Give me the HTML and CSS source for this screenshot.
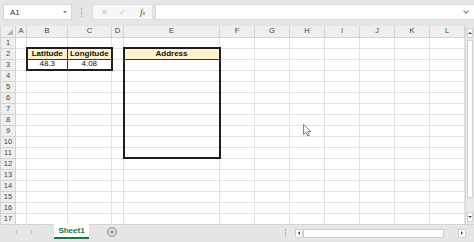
FILE: index.html
```html
<!DOCTYPE html>
<html lang="en">
<head>
  <meta charset="UTF-8" />
  <title>Book1 - Excel</title>
  <link rel="stylesheet" href="styles.css">
</head>
<body>
  <div class="app">

    <!-- Formula bar -->
    <div class="formula-bar">
      <div class="name-box"><span>A1</span><span class="caret"></span></div>
      <div class="dots"></div>
      <div class="tools">
        <span class="tool-x">✕</span>
        <span class="tool-ok">✓</span>
        <span class="tool-fx">f<small>x</small></span>
      </div>
      <div class="formula-input"><span class="expand"></span></div>
    </div>

    <!-- Sheet -->
    <div class="sheet">
      <table class="grid">
        <colgroup>
          <col class="c-rh"><col class="c-a"><col class="c-b"><col class="c-c"><col class="c-d"><col class="c-e">
          <col class="c-n"><col class="c-n"><col class="c-n"><col class="c-n"><col class="c-n"><col class="c-n"><col class="c-n">
        </colgroup>
        <tr class="heads"><th class="corner"><span></span></th><th>A</th><th>B</th><th>C</th><th>D</th><th>E</th><th>F</th><th>G</th><th>H</th><th>I</th><th>J</th><th>K</th><th>L</th></tr>
        <tr><th>1</th><td></td><td></td><td></td><td></td><td></td><td></td><td></td><td></td><td></td><td></td><td></td><td></td></tr>
        <tr><th>2</th><td></td><td class="hd bt bl ir ib">Latitude</td><td class="hd bt br ib">Longitude</td><td></td><td class="hd bt bl br ib">Address</td><td></td><td></td><td></td><td></td><td></td><td></td><td></td></tr>
        <tr><th>3</th><td></td><td class="num bl bb ir">48.3</td><td class="num br bb">4.08</td><td></td><td class="bl br"></td><td></td><td></td><td></td><td></td><td></td><td></td><td></td></tr>
        <tr><th>4</th><td></td><td></td><td></td><td></td><td class="bl br"></td><td></td><td></td><td></td><td></td><td></td><td></td><td></td></tr>
        <tr><th>5</th><td></td><td></td><td></td><td></td><td class="bl br"></td><td></td><td></td><td></td><td></td><td></td><td></td><td></td></tr>
        <tr><th>6</th><td></td><td></td><td></td><td></td><td class="bl br"></td><td></td><td></td><td></td><td></td><td></td><td></td><td></td></tr>
        <tr><th>7</th><td></td><td></td><td></td><td></td><td class="bl br"></td><td></td><td></td><td></td><td></td><td></td><td></td><td></td></tr>
        <tr><th>8</th><td></td><td></td><td></td><td></td><td class="bl br"></td><td></td><td></td><td></td><td></td><td></td><td></td><td></td></tr>
        <tr><th>9</th><td></td><td></td><td></td><td></td><td class="bl br"></td><td></td><td></td><td></td><td></td><td></td><td></td><td></td></tr>
        <tr><th>10</th><td></td><td></td><td></td><td></td><td class="bl br"></td><td></td><td></td><td></td><td></td><td></td><td></td><td></td></tr>
        <tr><th>11</th><td></td><td></td><td></td><td></td><td class="bl br bb"></td><td></td><td></td><td></td><td></td><td></td><td></td><td></td></tr>
        <tr><th>12</th><td></td><td></td><td></td><td></td><td></td><td></td><td></td><td></td><td></td><td></td><td></td><td></td></tr>
        <tr><th>13</th><td></td><td></td><td></td><td></td><td></td><td></td><td></td><td></td><td></td><td></td><td></td><td></td></tr>
        <tr><th>14</th><td></td><td></td><td></td><td></td><td></td><td></td><td></td><td></td><td></td><td></td><td></td><td></td></tr>
        <tr><th>15</th><td></td><td></td><td></td><td></td><td></td><td></td><td></td><td></td><td></td><td></td><td></td><td></td></tr>
        <tr><th>16</th><td></td><td></td><td></td><td></td><td></td><td></td><td></td><td></td><td></td><td></td><td></td><td></td></tr>
        <tr><th>17</th><td></td><td></td><td></td><td></td><td></td><td></td><td></td><td></td><td></td><td></td><td></td><td></td></tr>
      </table>

      <div class="vscroll">
        <div class="arrow-btn"><span class="tri-up"></span></div>
        <div class="vthumb"></div>
        <div class="vtrack"></div>
        <div class="arrow-btn"><span class="tri-down"></span></div>
      </div>
    </div>

    <!-- Sheet tabs + horizontal scroll -->
    <div class="tab-bar">
      <div class="nav"><span class="tri-left faint"></span><span class="tri-right faint"></span></div>
      <div class="tab">Sheet1</div>
      <div class="add">
        <svg width="10" height="10" viewBox="0 0 10 10">
          <circle cx="5" cy="5" r="4.3" fill="none" stroke="#777" stroke-width="0.9"/>
          <path d="M5 2.8V7.2M2.8 5H7.2" stroke="#777" stroke-width="0.9"/>
        </svg>
      </div>
      <div class="spacer"></div>
      <div class="hscroll">
        <div class="hdots"></div>
        <div class="arrow-btn h"><span class="tri-left"></span></div>
        <div class="hthumb"></div>
        <div class="htrack"></div>
        <div class="arrow-btn h"><span class="tri-right"></span></div>
      </div>
    </div>

    <!-- mouse pointer -->
    <svg class="pointer" width="9" height="13" viewBox="0 0 9 13">
      <path d="M0.5 0.5V10.5L3 8.2L4.8 12L6.4 11.3L4.7 7.6H8Z" fill="#fff" stroke="#666" stroke-width="0.8"/>
    </svg>
  </div>
</body>
</html>
```

FILE: styles.css
```css
body {
  margin: 0;
  padding: 0;
  background: #e6e6e6;
  font-family: 'Liberation Sans', Arial, sans-serif;
  color: #222;
}

.app {
  position: relative;
  width: 474px;
  height: 242px;
  overflow: hidden;
  background: #e6e6e6;
}

/* ---------- formula bar ---------- */

.formula-bar {
  display: flex;
  align-items: center;
  height: 22px;
  padding-top: 2px;
  margin-bottom: 4px;
  box-sizing: border-box;
}

.name-box {
  display: flex;
  align-items: center;
  justify-content: space-between;
  width: 69px;
  height: 16px;
  margin-left: 3px;
  padding: 0 4px 0 6px;
  box-sizing: border-box;
  background: #fff;
  border: 1px solid #d6d6d6;
  font-size: 8px;
  color: #333;
}

.caret {
  width: 0;
  height: 0;
  border-left: 2px solid transparent;
  border-right: 2px solid transparent;
  border-top: 2px solid #666;
}

.dots {
  width: 1px;
  height: 9px;
  margin: 0 9px 0 9px;
  border-left: 1px dotted #9a9a9a;
}

.tools {
  display: flex;
  align-items: center;
  width: 61px;
  height: 16px;
  box-sizing: border-box;
  padding-left: 7px;
  gap: 9px;
  background: #f7f7f7;
  border: 1px solid #dedede;
  font-size: 8px;
}

.tool-x,
.tool-ok {
  color: #c4c4c4;
  width: 9px;
  text-align: center;
}

.tool-fx {
  margin-left: 4px;
  color: #444;
  font-family: 'Liberation Serif', serif;
  font-style: italic;
  font-size: 9px;
}

.tool-fx small {
  font-size: 6px;
}

.formula-input {
  position: relative;
  flex: 1;
  height: 16px;
  margin-left: 2px;
  background: #fff;
  border: 1px solid #d6d6d6;
  border-right: none;
  box-sizing: border-box;
}

.expand {
  position: absolute;
  right: 6px;
  top: 4px;
  width: 3px;
  height: 3px;
  border-right: 1px solid #777;
  border-bottom: 1px solid #777;
  transform: rotate(45deg);
}

/* ---------- sheet grid ---------- */

.sheet {
  display: flex;
  height: 198px;
  overflow: hidden;
  background: #fff;
}

.grid {
  border-collapse: collapse;
  table-layout: fixed;
  width: 464px;
  font-size: 8px;
}

.c-rh { width: 15px; }
.c-a { width: 11px; }
.c-b { width: 41px; }
.c-c { width: 44px; }
.c-d { width: 12px; }
.c-e { width: 96px; }
.c-n { width: 35px; }

.grid tr {
  height: 11px;
}

.grid td,
.grid th {
  padding: 0;
  height: 8px;
  line-height: 8px;
  overflow: hidden;
  white-space: nowrap;
  text-align: center;
}

.grid td {
  border: 1px solid #e2e2e2;
  color: #111;
}

.grid th {
  background: #efefef;
  border: 1px solid #d4d4d4;
  font-weight: normal;
  color: #444;
  font-size: 7.5px;
}

.grid tr.heads th {
  border-top: none;
}

.grid th.corner {
  position: relative;
}

.corner span {
  position: absolute;
  right: 2px;
  bottom: 2px;
  width: 0;
  height: 0;
  border-left: 6px solid transparent;
  border-bottom: 6px solid #b4b4b4;
}

.grid td.hd {
  background: #fff2cc;
  font-weight: bold;
}

.grid td.bt { border-top: 2px solid #1e1e1e; }
.grid td.bb { border-bottom: 2px solid #1e1e1e; }
.grid td.bl { border-left: 2px solid #1e1e1e; }
.grid td.br { border-right: 2px solid #1e1e1e; }
.grid td.ib { border-bottom: 1px solid #333; }
.grid td.ir { border-right: 1px solid #333; }

/* ---------- scrollbars ---------- */

.vscroll {
  display: flex;
  flex-direction: column;
  width: 10px;
  background: #eaeaea;
  border-left: 1px solid #d8d8d8;
}

.arrow-btn {
  display: flex;
  align-items: center;
  justify-content: center;
  height: 8px;
  margin: 2px 1px;
  background: #fff;
  border: 1px solid #d0d0d0;
}

.vthumb {
  height: 156px;
  margin: 0 1px;
  background: #fff;
  border: 1px solid #cfcfcf;
}

.vtrack {
  flex: 1;
}

.tri-up,
.tri-down,
.tri-left,
.tri-right {
  width: 0;
  height: 0;
}

.tri-up {
  border-left: 2px solid transparent;
  border-right: 2px solid transparent;
  border-bottom: 2px solid #444;
}

.tri-down {
  border-left: 2px solid transparent;
  border-right: 2px solid transparent;
  border-top: 2px solid #444;
}

.tri-left {
  border-top: 2px solid transparent;
  border-bottom: 2px solid transparent;
  border-right: 2px solid #444;
}

.tri-right {
  border-top: 2px solid transparent;
  border-bottom: 2px solid transparent;
  border-left: 2px solid #444;
}

.tri-left.faint { border-right-color: #c2c2c2; }
.tri-right.faint { border-left-color: #c2c2c2; }

/* ---------- tab bar ---------- */

.tab-bar {
  display: flex;
  align-items: flex-start;
  height: 18px;
  background: #e6e6e6;
  border-top: 1px solid #d4d4d4;
  box-sizing: border-box;
}

.nav {
  display: flex;
  align-items: center;
  gap: 14px;
  width: 39px;
  height: 14px;
  padding-left: 15px;
}

.tab {
  width: 35px;
  height: 13px;
  margin-top: -1px;
  background: #fff;
  border-bottom: 2px solid #217346;
  color: #217346;
  font-weight: bold;
  font-size: 8px;
  line-height: 14px;
  text-align: center;
}

.add {
  margin: 2px 0 0 18px;
  height: 10px;
}

.add svg {
  display: block;
}

.spacer {
  flex: 1;
}

.hscroll {
  display: flex;
  align-items: center;
  width: 190px;
  height: 14px;
  margin-top: 1px;
}

.hdots {
  width: 1px;
  height: 8px;
  margin: 0 8px 0 1px;
  border-left: 1px dotted #a8a8a8;
}

.arrow-btn.h {
  width: 6px;
  height: 7px;
  margin: 0;
}

.hthumb {
  width: 139px;
  height: 7px;
  background: #fff;
  border: 1px solid #cfcfcf;
}

.htrack {
  width: 14px;
}

.pointer {
  position: absolute;
  left: 303px;
  top: 124px;
}
```
